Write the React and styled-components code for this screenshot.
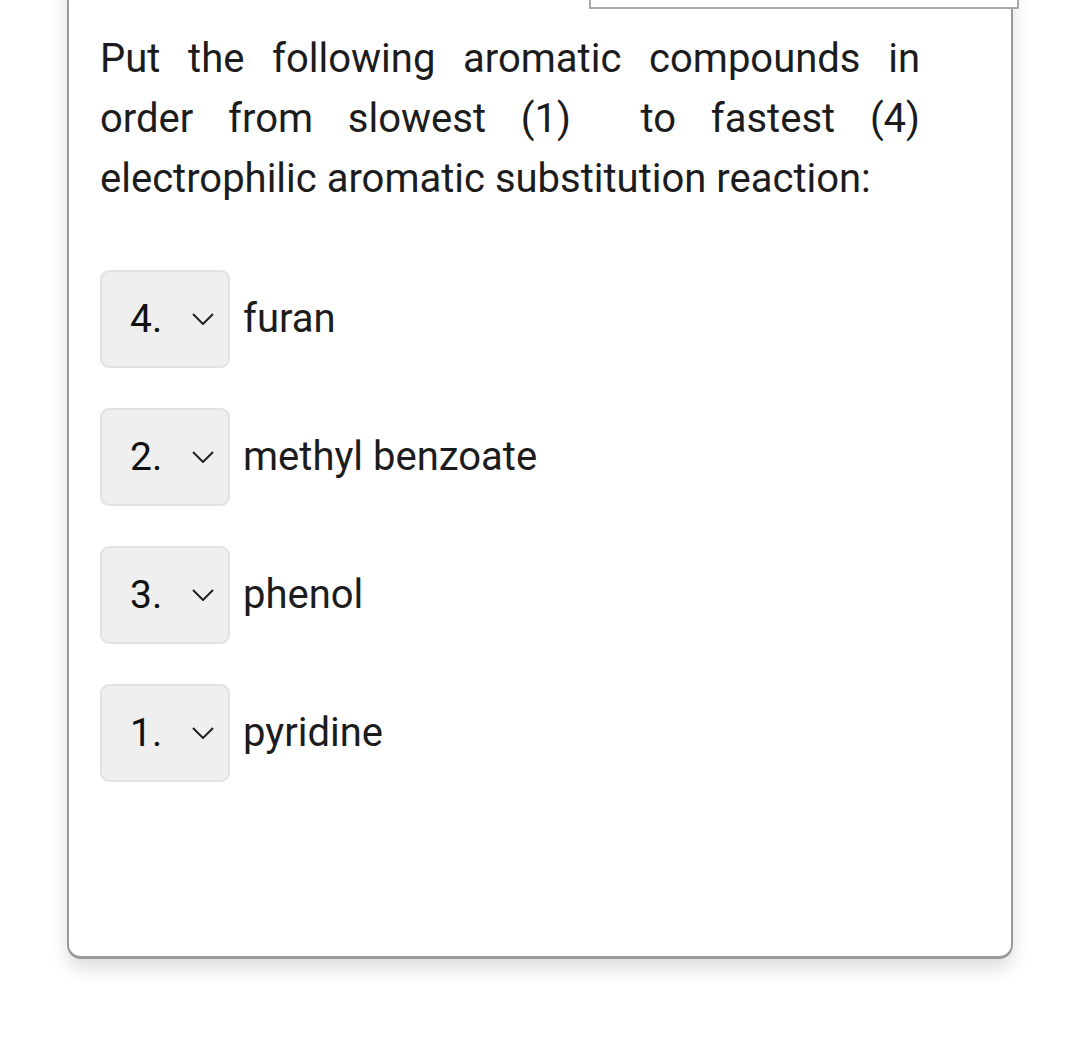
import React from 'react';
import styled, { createGlobalStyle } from 'styled-components';

const GlobalStyle = createGlobalStyle`
	body {
		margin: 0;
		background: #fff;
		font-family: Roboto, "Liberation Sans", sans-serif;
		color: #1c1c1c;
	}
`;

const Page = styled.div`
	position: relative;
	height: 1042px;
	overflow: hidden;
`;

const TopTab = styled.div`
	position: absolute;
	top: -40px;
	left: 589px;
	width: 426px;
	height: 45px;
	border: 2px solid #a9a9a9;
	background: #fff;
	z-index: 2;
`;

const Card = styled.div`
	margin: -30px 0 0 67px;
	width: 946px;
	height: 989px;
	box-sizing: border-box;
	border: 2px solid #9a9a9a;
	border-bottom-width: 3px;
	border-radius: 14px;
	background: #fff;
	box-shadow: 0 10px 18px rgba(0, 0, 0, 0.13);
	padding: 57px 0 0 31px;
`;

const Prompt = styled.p`
	margin: 0;
	width: 820px;
	font-size: 40px;
	line-height: 60px;
	text-align: justify;
`;

const Answers = styled.div`
	display: flex;
	flex-direction: column;
	gap: 40px;
	margin-top: 61px;
`;

const Row = styled.div`
	display: flex;
	align-items: center;
	gap: 13px;
`;

const Select = styled.div`
	display: flex;
	align-items: center;
	width: 130px;
	height: 98px;
	box-sizing: border-box;
	padding: 0 14px 0 28px;
	background: #efefef;
	border: 2px solid #e2e2e2;
	border-radius: 9px;
	font-size: 39px;
	color: #111;
`;

const Value = styled.span`
	flex: 1;
`;

const Label = styled.span`
	font-size: 40px;
	line-height: 60px;
`;

const Chevron = () => (
	<svg width="22" height="12" viewBox="0 0 22 12" fill="none">
		<path d="M1 1l10 10L21 1" stroke="#222" strokeWidth="2" />
	</svg>
);

const items = [
	{ rank: '4.', name: 'furan' },
	{ rank: '2.', name: 'methyl benzoate' },
	{ rank: '3.', name: 'phenol' },
	{ rank: '1.', name: 'pyridine' },
];

export default function App() {
	return (
		<Page>
			<GlobalStyle />
			<TopTab />
			<Card>
				<Prompt>
					Put the following aromatic compounds in order from slowest (1)&nbsp; to
					fastest (4) electrophilic aromatic substitution reaction:
				</Prompt>
				<Answers>
					{items.map((item) => (
						<Row key={item.name}>
							<Select>
								<Value>{item.rank}</Value>
								<Chevron />
							</Select>
							<Label>{item.name}</Label>
						</Row>
					))}
				</Answers>
			</Card>
		</Page>
	);
}
